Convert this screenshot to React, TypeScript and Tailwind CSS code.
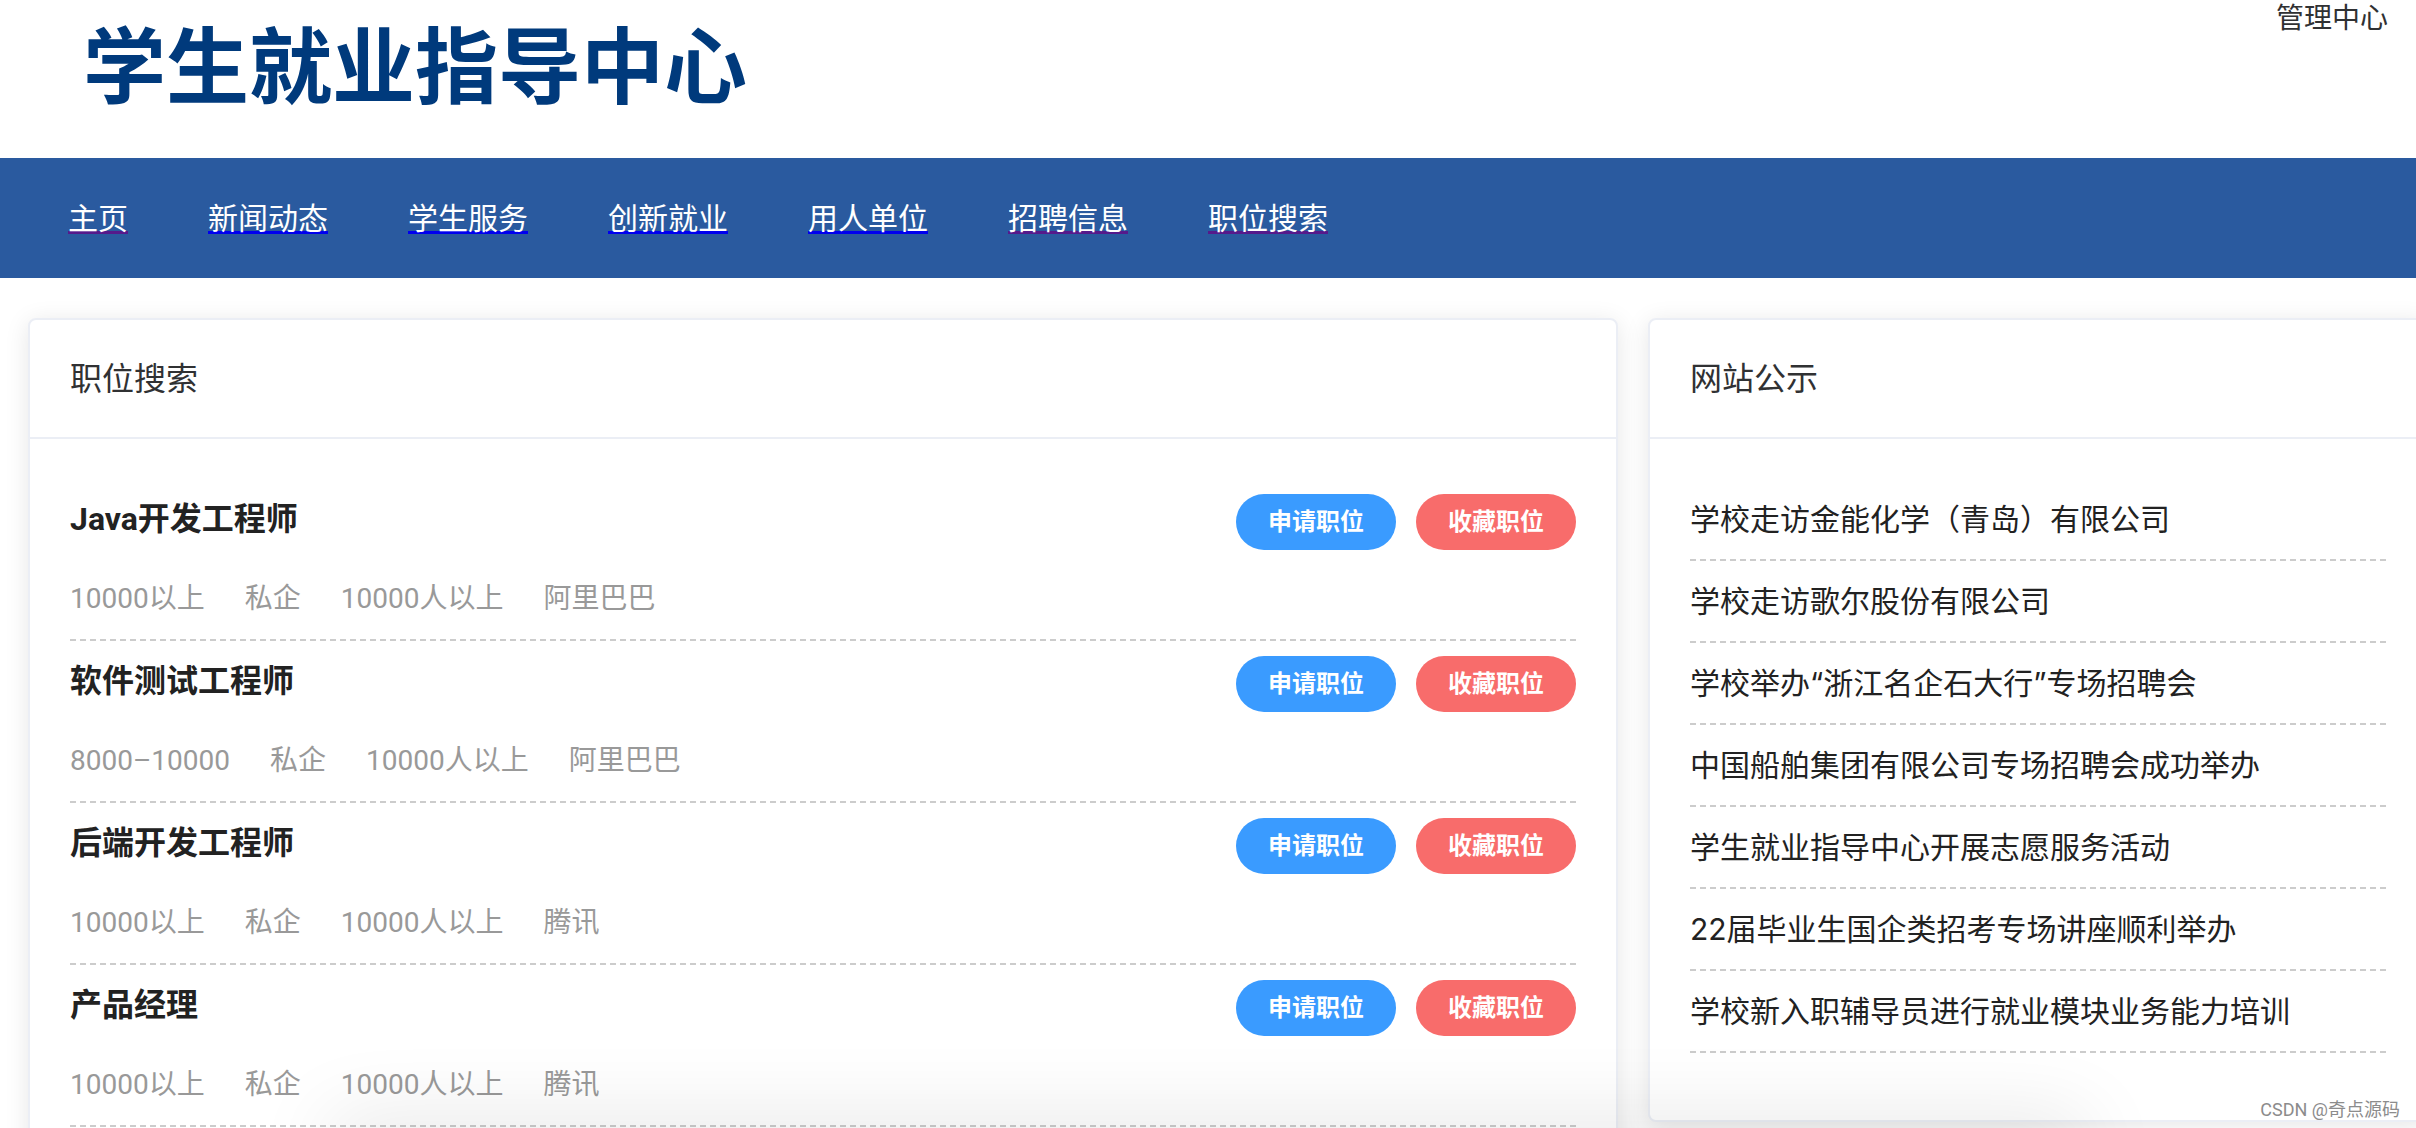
import React from "react";

const nav = [
  { label: "主页", visited: true },
  { label: "新闻动态", visited: false },
  { label: "学生服务", visited: false },
  { label: "创新就业", visited: false },
  { label: "用人单位", visited: false },
  { label: "招聘信息", visited: true },
  { label: "职位搜索", visited: true },
];

const jobs = [
  { title: "Java开发工程师", meta: ["10000以上", "私企", "10000人以上", "阿里巴巴"] },
  { title: "软件测试工程师", meta: ["8000–10000", "私企", "10000人以上", "阿里巴巴"] },
  { title: "后端开发工程师", meta: ["10000以上", "私企", "10000人以上", "腾讯"] },
  { title: "产品经理", meta: ["10000以上", "私企", "10000人以上", "腾讯"] },
];

const notices = [
  "学校走访金能化学（青岛）有限公司",
  "学校走访歌尔股份有限公司",
  "学校举办“浙江名企石大行”专场招聘会",
  "中国船舶集团有限公司专场招聘会成功举办",
  "学生就业指导中心开展志愿服务活动",
  "22届毕业生国企类招考专场讲座顺利举办",
  "学校新入职辅导员进行就业模块业务能力培训",
];

/* Dashed rule: 6px dash, 4px gap */
function Dashes() {
  return (
    <div className="h-[2px] bg-[repeating-linear-gradient(to_right,#cccccc_0,#cccccc_6px,transparent_6px,transparent_10px)]" />
  );
}

function Card({ title, children }: { title: string; children: React.ReactNode }) {
  return (
    <section className="rounded-lg border-2 border-[#ebeef5] bg-white shadow-[0_4px_24px_rgba(0,0,0,0.1)]">
      <h2 className="border-b-2 border-[#ebeef5] px-10 py-9 text-[32px] leading-[45px] text-[#303133]">
        {title}
      </h2>
      <div className="px-10 pt-10 pb-[67px]">{children}</div>
    </section>
  );
}

function PillButton({ tone, children }: { tone: "blue" | "red"; children: React.ReactNode }) {
  return (
    <button
      type="button"
      className={`h-14 w-40 rounded-full text-2xl font-bold text-white ${
        tone === "blue" ? "bg-[#3a9bff]" : "bg-[#f86c6b]"
      }`}
    >
      {children}
    </button>
  );
}

export default function App() {
  return (
    <div className="relative h-screen overflow-hidden bg-white font-[Inter,'Noto_Sans_CJK_SC',sans-serif] text-[#222222]">
      <header className="flex h-[158px] items-start justify-between pr-7 pl-[83px]">
        <h1 className="pt-4 font-['Noto_Sans_CJK_SC',sans-serif] text-[83px] leading-[90px] font-bold text-[#003a7c]">
          学生就业指导中心
        </h1>
        <a href="#admin" className="text-[28px] leading-9 text-[#303133]">
          管理中心
        </a>
      </header>

      <nav className="flex h-[120px] items-center gap-20 bg-[#2a5a9f] px-[68px] text-[30px] leading-10 text-white">
        {nav.map((item) => (
          <a
            key={item.label}
            href="#nav"
            className={`underline decoration-[3px] underline-offset-2 [text-decoration-skip-ink:none] ${
              item.visited ? "decoration-[#551a8b]" : "decoration-[#0000ee]"
            }`}
          >
            {item.label}
          </a>
        ))}
      </nav>

      <main className="-mr-3 grid grid-cols-[53fr_26fr] items-start gap-[30px] pt-10 pl-7">
        <Card title="职位搜索">
          <ul className="font-[Roboto,'Noto_Sans_CJK_SC',sans-serif]">
            {jobs.map((job) => (
              <li key={job.title}>
                <div className="flex h-40 justify-between pt-[15px]">
                  <div>
                    <h3 className="text-[32px] leading-[50px] font-bold">{job.title}</h3>
                    <p className="flex gap-10 pt-[30px] text-[28px] leading-[50px] text-[#999999]">
                      {job.meta.map((m) => (
                        <span key={m}>{m}</span>
                      ))}
                    </p>
                  </div>
                  <div className="flex gap-5">
                    <PillButton tone="blue">申请职位</PillButton>
                    <PillButton tone="red">收藏职位</PillButton>
                  </div>
                </div>
                <Dashes />
              </li>
            ))}
          </ul>
        </Card>

        <Card title="网站公示">
          <ul>
            {notices.map((n) => (
              <li key={n}>
                <a href="#notice" className="block h-20 text-[30px] leading-[80px]">
                  {n}
                </a>
                <Dashes />
              </li>
            ))}
          </ul>
        </Card>
      </main>

      <div className="pointer-events-none absolute inset-x-[340px] top-full h-10 shadow-[0_0_80px_10px_rgba(0,0,0,0.1)]" />
      <p className="absolute right-4 bottom-1 font-[Roboto,'Noto_Sans_CJK_SC',sans-serif] text-[18px] leading-7 text-[#8c8c8c]">
        CSDN @奇点源码
      </p>
    </div>
  );
}
